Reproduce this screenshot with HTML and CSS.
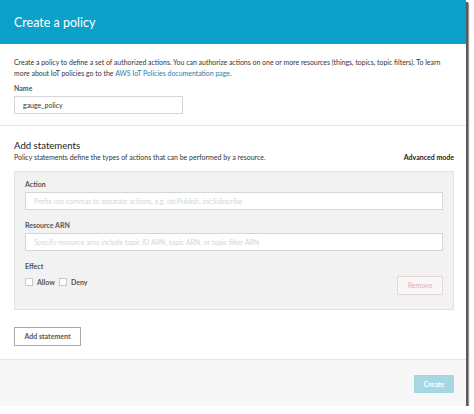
FILE: index.html
```html
<!DOCTYPE html>
<html>
<head>
<meta charset="utf-8">
<link rel="stylesheet" href="styles.css">
</head>
<body>
<div class="dialog">
  <div class="header"><h1 class="title">Create a policy</h1></div>
  <div class="body">
    <p class="desc">Create a policy to define a set of authorized actions. You can authorize actions on one or more resources (things, topics, topic filters). To learn more about IoT policies go to the <a class="link">AWS IoT Policies documentation page</a>.</p>
    <div class="label">Name</div>
    <div class="input name-input">gauge_policy</div>
  </div>
  <div class="statements">
    <h2 class="sub">Add statements</h2>
    <div class="row">
      <span class="desc2">Policy statements define the types of actions that can be performed by a resource.</span>
      <span class="adv">Advanced mode</span>
    </div>
    <div class="panel">
      <div class="label">Action</div>
      <div class="input wide ph">Prefix use commas to separate actions, e.g. iot:Publish, iot:Subscribe</div>
      <div class="label">Resource ARN</div>
      <div class="input wide ph">Specify resource arns include topic ID ARN, topic ARN, or topic filter ARN</div>
      <div class="label">Effect</div>
      <div class="effect">
        <div class="checks">
          <span class="cb"></span><span class="cbl">Allow</span>
          <span class="cb"></span><span class="cbl">Deny</span>
        </div>
        <div class="btn remove">Remove</div>
      </div>
    </div>
    <div class="btn add">Add statement</div>
  </div>
  <div class="footer"><div class="btn create">Create</div></div>
</div>
</body>
</html>
```
FILE: styles.css
```css
html, body { margin: 0; padding: 0; background: #fff; }
body { font-family: Lato, "Open Sans", sans-serif; color: #333; }
.dialog {
  width: 466px;
  height: 406px;
  background: #fff;
  box-shadow: 2px 2px 0 #5a5a5a, 3px 3px 1px #999;
  display: flex;
  flex-direction: column;
  overflow: hidden;
}
.header {
  height: 44px;
  background: #0ca1c9;
  display: flex;
  align-items: center;
  padding-left: 14px;
  flex: none;
}
.title { margin: 0; font-size: 12.5px; font-weight: 400; color: #fff; }
.body { padding: 13px 14px 11px; border-bottom: 1px solid #e6e6e6; flex: none; }
.desc { margin: 0 0 4px; font-size: 6.95px; line-height: 11px; color: #333; }
.link { color: #1f7ea8; display: inline-block; }
.label { font-size: 7px; font-weight: 700; color: #555; line-height: 10px; margin-bottom: 3px; }
.input {
  height: 16px;
  border: 1px solid #d5d5d5;
  background: #fff;
  font-size: 7px;
  line-height: 16px;
  padding-left: 8px;
  box-sizing: content-box;
}
.name-input { width: 159px; color: #333; }
.statements { padding: 14px 12px 13px 14px; border-bottom: 1px solid #e6e6e6; flex: none; }
.sub { margin: 0; font-size: 9.6px; font-weight: 400; color: #222; line-height: 12px; }
.row { display: flex; justify-content: space-between; align-items: center; font-size: 7px; line-height: 10px; margin-bottom: 9px; }
.desc2 { color: #333; }
.adv { font-weight: 700; color: #222; }
.panel {
  background: #f2f2f2;
  border: 1px solid #e3e3e3;
  padding: 7px 10px 14px;
}
.wide { margin-bottom: 10px; }
.ph { color: #d4d4d4; }
.effect { display: flex; justify-content: space-between; align-items: flex-start; }
.checks { display: flex; align-items: center; margin-top: 4px; }
.cb { width: 6px; height: 6px; border: 1px solid #c8c8c8; background: #fff; margin-right: 4px; }
.cbl { font-size: 7px; font-weight: 700; color: #555; margin-right: 4px; }
.btn {
  font-size: 7px;
  text-align: center;
  box-sizing: border-box;
}
.remove {
  width: 46px; height: 19px; line-height: 17px;
  border: 1px solid #e6d6d6;
  color: #e0b0b0;
  background: #f7f7f7;
  margin-top: 2px;
}
.add {
  width: 67px; height: 19px; line-height: 17px;
  border: 1px solid #aaa;
  color: #555;
  font-weight: 700;
  background: #fff;
  margin-top: 17px;
}
.footer {
  flex: 1;
  background: #f7f7f7;
  display: flex;
  justify-content: flex-end;
  align-items: flex-start;
  padding: 15px 12px 0 0;
}
.create {
  width: 40px; height: 18px; line-height: 18px;
  background: #a6d8e4;
  color: #fff;
  font-weight: 700;
}
```
